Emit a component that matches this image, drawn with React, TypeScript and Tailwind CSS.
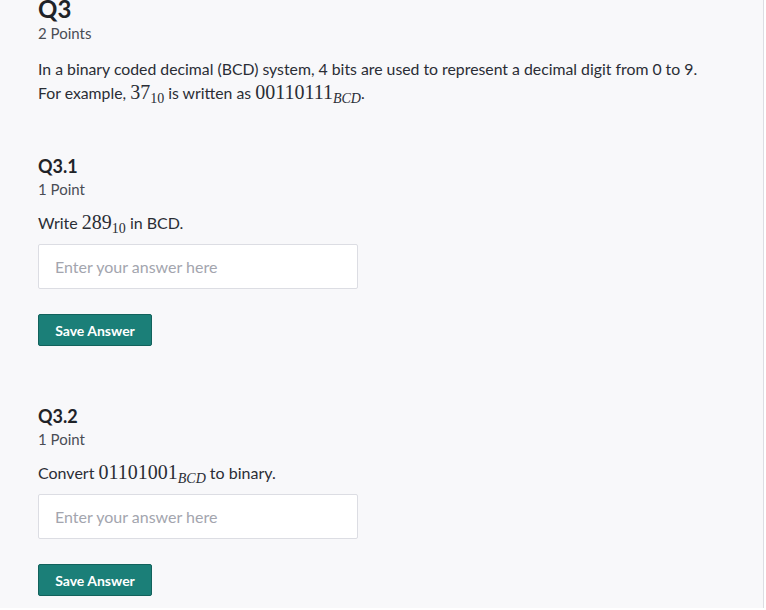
import React from 'react';

const sans = "font-['Lato','Open_Sans',sans-serif]";
const math = "font-['Liberation_Serif','DejaVu_Serif',serif]";

function Sub({ children, italic }: { children: React.ReactNode; italic?: boolean }) {
    return (
        <sub className={`${math} text-[14px] leading-none relative top-[4px] align-baseline ${italic ? 'italic' : ''}`}>
            {children}
        </sub>
    );
}

function Num({ children }: { children: React.ReactNode }) {
    return <span className={`${math} text-[20px] leading-none`}>{children}</span>;
}

function SubQuestion({ title, prompt }: { title: string; prompt: React.ReactNode }) {
    return (
        <div className="flex flex-col">
            <h3 className="text-[18px] font-bold text-[#1f2328] leading-[20px] h-[20px]">{title}</h3>
            <p className="text-[15px] text-[#4a4d55] leading-[18px] h-[18px] mt-[4px]">1 Point</p>
            <p className="text-[16px] text-[#2a2d35] leading-[24px] h-[24px] mt-[13px]">{prompt}</p>
            <input
                type="text"
                placeholder="Enter your answer here"
                className="mt-[9px] w-[320px] h-[45px] bg-white border border-[#dcdde3] rounded-[2px] px-4 text-[16px] text-[#2a2d35] placeholder:text-[#a3a5ae] outline-none"
            />
            <button className="mt-[25px] w-[114px] h-[32px] bg-[#1b7f78] border border-[#12625c] rounded-[2px] text-white text-[14px] font-bold">
                Save Answer
            </button>
        </div>
    );
}

export default function App() {
    return (
        <div className={`${sans} w-[766px] h-[610px] bg-white overflow-hidden`}>
            <div className="w-[764px] h-full bg-[#f8f8fa] border-r border-[#dddde3] pl-[38px]">
                {/* Question header */}
                <h2 className="text-[24px] font-bold text-[#1f2328] leading-[22px] h-[22px] -mt-[2px]">Q3</h2>
                <p className="text-[15px] text-[#4a4d55] leading-[18px] h-[18px] mt-[4px]">2 Points</p>
                <div className="text-[15.8px] text-[#2a2d35] leading-[24px] mt-[15px]">
                    <p className="h-[24px]">In a binary coded decimal (BCD) system, 4 bits are used to represent a decimal digit from 0 to 9.</p>
                    <p className="h-[24px]">
                        For example, <Num>37</Num>
                        <Sub>10</Sub> is written as <Num>00110111</Num>
                        <Sub italic>BCD</Sub>.
                    </p>
                </div>

                <div className="mt-[51px] flex flex-col gap-[60px]">
                    <SubQuestion
                        title="Q3.1"
                        prompt={
                            <>
                                Write <Num>289</Num>
                                <Sub>10</Sub> in BCD.
                            </>
                        }
                    />
                    <SubQuestion
                        title="Q3.2"
                        prompt={
                            <>
                                Convert <Num>01101001</Num>
                                <Sub italic>BCD</Sub> to binary.
                            </>
                        }
                    />
                </div>
            </div>
        </div>
    );
}
